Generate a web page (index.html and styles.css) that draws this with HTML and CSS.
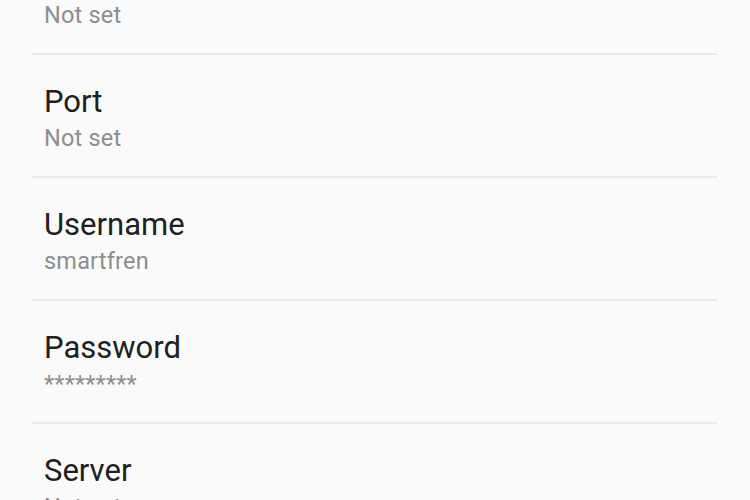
FILE: index.html
```html
<!DOCTYPE html>
<html>
<head>
<meta charset="utf-8">
<link rel="stylesheet" href="styles.css">
</head>
<body>
<div class="list">
  <div class="item"><div class="title">Proxy</div><div class="sub">Not set</div></div>
  <div class="item"><div class="title">Port</div><div class="sub">Not set</div></div>
  <div class="item"><div class="title">Username</div><div class="sub">smartfren</div></div>
  <div class="item"><div class="title">Password</div><div class="sub">*********</div></div>
  <div class="item"><div class="title">Server</div><div class="sub">Not set</div></div>
</div>
</body>
</html>
```
FILE: styles.css
```css
html, body {
  margin: 0;
  padding: 0;
  background: #fafafa;
  height: 100%;
  overflow: hidden;
}
.list {
  margin-top: -68px;
  font-family: Roboto, "Noto Sans", sans-serif;
}
.item {
  margin: 0 33px 0 32px;
  padding: 29px 12px 23px;
  border-bottom: 2px solid #e8e8e8;
}
.title {
  font-size: 31px;
  line-height: 36px;
  color: #202020;
}
.sub {
  margin-top: 3px;
  font-size: 23.5px;
  line-height: 30px;
  letter-spacing: 0.2px;
  color: #8e8e8e;
}
```
